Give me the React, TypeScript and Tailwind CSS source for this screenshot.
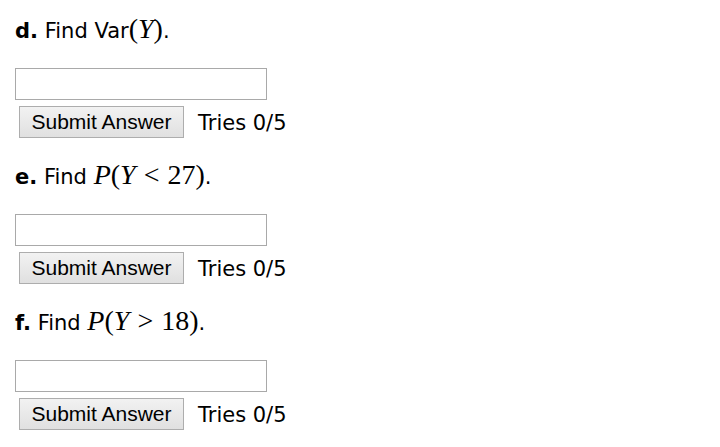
import React from 'react';

const serif = { fontFamily: '"Liberation Serif", "DejaVu Serif", serif' };
const sans = { fontFamily: '"DejaVu Sans", Verdana, sans-serif' };

function Question({ label, children }: { label: string; children: React.ReactNode }) {
  return (
    <div className="pb-[19px]">
      <p className="h-[36px] leading-[36px] text-[21px] text-black whitespace-nowrap" style={sans}>
        <b>{label}</b> Find {children}.
      </p>
      <div className="mt-[21px] flex flex-col">
        <input type="text" className="w-[252px] h-[32px] border border-[#a9a9a9] bg-white outline-none" />
        <div className="mt-[6px] h-[32px] flex items-center gap-[14px]">
          <button className="ml-[4px] w-[165px] h-[32px] pb-[2px] border border-[#adadad] bg-gradient-to-b from-[#f2f2f2] to-[#e0e0e0] text-black text-[21px] leading-none font-['Liberation_Sans',Arial,sans-serif]">
            Submit Answer
          </button>
          <span className="text-black text-[21px] leading-none pt-[2px]" style={sans}>Tries 0/5</span>
        </div>
      </div>
    </div>
  );
}

export default function App() {
  return (
    <div className="w-[720px] h-[447px] bg-white px-[15px] pt-[11px] overflow-hidden">
      <Question label="d.">
        Var
        <span style={serif} className="text-[28px]">
          (<i>Y</i>)
        </span>
      </Question>
      <Question label="e.">
        <span style={serif} className="text-[28px]">
          <i>P</i>(<i>Y</i>
          <span className="mx-[8px]">&lt;</span>27)
        </span>
      </Question>
      <Question label="f.">
        <span style={serif} className="text-[28px]">
          <i>P</i>(<i>Y</i>
          <span className="mx-[8px]">&gt;</span>18)
        </span>
      </Question>
    </div>
  );
}
